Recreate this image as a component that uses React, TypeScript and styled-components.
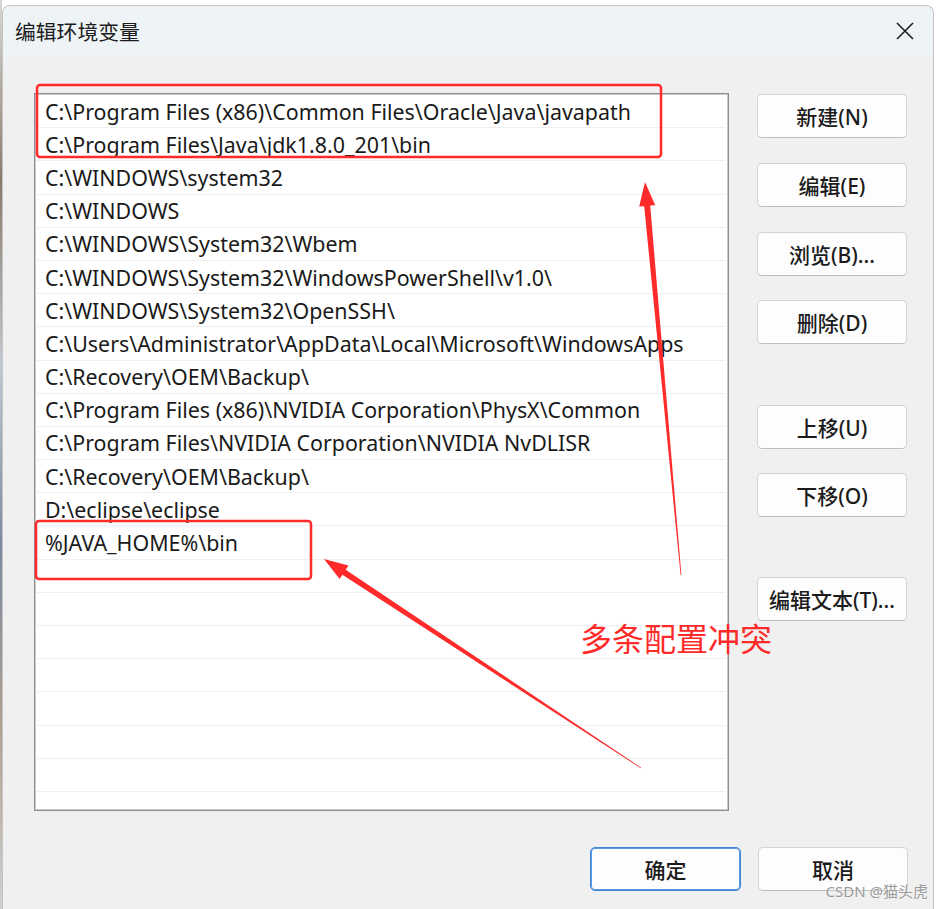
import React from 'react'
import styled, { createGlobalStyle } from 'styled-components'

const GlobalStyle = createGlobalStyle`
  html, body {
    margin: 0;
    padding: 0;
    background: #ffffff;
  }
  * {
    box-sizing: border-box;
  }
`

const FONT = `"Noto Sans", "Noto Sans CJK SC", "Liberation Sans", sans-serif`

const PATHS = [
  'C:\\Program Files (x86)\\Common Files\\Oracle\\Java\\javapath',
  'C:\\Program Files\\Java\\jdk1.8.0_201\\bin',
  'C:\\WINDOWS\\system32',
  'C:\\WINDOWS',
  'C:\\WINDOWS\\System32\\Wbem',
  'C:\\WINDOWS\\System32\\WindowsPowerShell\\v1.0\\',
  'C:\\WINDOWS\\System32\\OpenSSH\\',
  'C:\\Users\\Administrator\\AppData\\Local\\Microsoft\\WindowsApps',
  'C:\\Recovery\\OEM\\Backup\\',
  'C:\\Program Files (x86)\\NVIDIA Corporation\\PhysX\\Common',
  'C:\\Program Files\\NVIDIA Corporation\\NVIDIA NvDLISR',
  'C:\\Recovery\\OEM\\Backup\\',
  'D:\\eclipse\\eclipse',
  '%JAVA_HOME%\\bin',
]

const TOTAL_ROWS = 22

const SIDE_BUTTONS = [
  { label: '新建(N)', gap: 0 },
  { label: '编辑(E)', gap: 25 },
  { label: '浏览(B)...', gap: 25 },
  { label: '删除(D)', gap: 24 },
  { label: '上移(U)', gap: 61 },
  { label: '下移(O)', gap: 24 },
  { label: '编辑文本(T)...', gap: 60 },
]

const Page = styled.div`
  position: relative;
  width: 944px;
  height: 909px;
  overflow: hidden;
  background: #ffffff;
  font-family: ${FONT};
`

const DesktopStrip = styled.div`
  position: absolute;
  left: 0;
  top: 0;
  width: 2px;
  height: 909px;
  background: linear-gradient(180deg, #d8d8d8 0%, #8a7a6a 20%, #c0c8d0 40%, #7a8aa0 60%, #b0a090 80%, #d0d0d0 100%);
`

const Window = styled.div`
  margin: 5px 0 0 2px;
  width: 932px;
  height: 904px;
  background: #f0f0f0;
  border: 1px solid #c4c4c4;
  border-bottom: none;
  border-radius: 8px 8px 0 0;
  overflow: hidden;
`

const TitleBar = styled.div`
  height: 51px;
  background: #eef3f6;
  display: flex;
  align-items: center;
  justify-content: space-between;
  padding: 0 18px 0 12px;
`

const Title = styled.div`
  font-size: 20.8px;
  color: #1c1c1c;
  font-family: "Noto Sans CJK SC", sans-serif;
  margin-top: -2px;
`

const CloseIcon = styled.svg`
  width: 20px;
  height: 20px;
  margin-top: -2px;
`

const Body = styled.div`
  display: flex;
  gap: 28px;
  padding: 36px 0 0 31px;
`

const ListBox = styled.div`
  width: 695px;
  height: 718px;
  background: #ffffff;
  border: 1px solid #8f8f8f;
  box-shadow: inset 0 0 0 1px #c9c9c9;
  padding: 1px 2px 0 2px;
  overflow: hidden;
`

const Row = styled.div`
  height: 33.2px;
  border-bottom: 1px solid #efefef;
  padding-left: 8px;
  display: flex;
  align-items: center;
  font-size: 21.4px;
  color: #1a1a1a;
  white-space: nowrap;
`

const ButtonColumn = styled.div`
  display: flex;
  flex-direction: column;
  padding-top: 1px;
`

const DialogButton = styled.button<{ $gap?: number; $primary?: boolean }>`
  width: ${(p) => (p.$primary ? 151 : 150)}px;
  height: 44px;
  margin-top: ${(p) => p.$gap ?? 0}px;
  background: #fdfdfd;
  border: 1px solid ${(p) => (p.$primary ? '#3f86d6' : '#d3d3d3')};
  border-bottom-color: ${(p) => (p.$primary ? '#3f86d6' : '#bdbdbd')};
  box-shadow: ${(p) => (p.$primary ? 'inset 0 0 0 1px #5a9ae0' : 'none')};
  border-radius: 5px;
  font-family: ${FONT};
  font-size: 21px;
  font-weight: 500;
  color: #1b1b1b;
  padding: 0;
  display: flex;
  align-items: center;
  justify-content: center;
`

const Footer = styled.div`
  display: flex;
  justify-content: flex-end;
  gap: 17px;
  margin-top: 36px;
  padding-right: 25px;
`

const Overlay = styled.svg`
  position: absolute;
  left: 0;
  top: 0;
  width: 944px;
  height: 909px;
  pointer-events: none;
`

const Note = styled.div`
  position: absolute;
  left: 580px;
  top: 615px;
  font-size: 32px;
  line-height: 44px;
  color: #ff2a2a;
  font-family: "Noto Sans CJK SC", sans-serif;
`

const Watermark = styled.div`
  position: absolute;
  right: 16px;
  top: 880px;
  font-size: 15px;
  color: #9a9a9a;
  font-family: "Noto Sans", "Noto Sans CJK SC", sans-serif;
  text-shadow: 0 0 2px #ffffff;
`

// tapered arrow from thin tail to a filled head at the tip
const arrowPoints = (tx: number, ty: number, px: number, py: number) => {
  const dx = px - tx
  const dy = py - ty
  const len = Math.hypot(dx, dy)
  const ux = dx / len
  const uy = dy / len
  const nx = -uy
  const ny = ux
  const headLen = 24
  const headW = 8
  const neckW = 3
  const tailW = 0.4
  const bx = px - ux * headLen
  const by = py - uy * headLen
  const pts = [
    [tx + nx * tailW, ty + ny * tailW],
    [bx + nx * neckW, by + ny * neckW],
    [bx + nx * headW, by + ny * headW],
    [px, py],
    [bx - nx * headW, by - ny * headW],
    [bx - nx * neckW, by - ny * neckW],
    [tx - nx * tailW, ty - ny * tailW],
  ]
  return pts.map(([x, y]) => `${x.toFixed(1)},${y.toFixed(1)}`).join(' ')
}

export default function App() {
  const rows = Array.from({ length: TOTAL_ROWS }, (_, i) => PATHS[i] ?? '')

  return (
    <Page>
      <GlobalStyle />
      <DesktopStrip />
      <Window>
        <TitleBar>
          <Title>编辑环境变量</Title>
          <CloseIcon viewBox="0 0 20 20">
            <path d="M2 2 L18 18 M18 2 L2 18" stroke="#1c1c1c" strokeWidth="1.6" fill="none" />
          </CloseIcon>
        </TitleBar>
        <Body>
          <ListBox>
            {rows.map((r, i) => (
              <Row key={i}>{r}</Row>
            ))}
          </ListBox>
          <ButtonColumn>
            {SIDE_BUTTONS.map((b) => (
              <DialogButton key={b.label} $gap={b.gap}>
                {b.label}
              </DialogButton>
            ))}
          </ButtonColumn>
        </Body>
        <Footer>
          <DialogButton $primary>确定</DialogButton>
          <DialogButton>取消</DialogButton>
        </Footer>
      </Window>

      <Overlay viewBox="0 0 944 909">
        <rect x="37" y="85" width="624" height="72" rx="3" fill="none" stroke="#ff2a2a" strokeWidth="2.5" />
        <rect x="36" y="521" width="275" height="58" rx="3" fill="none" stroke="#ff2a2a" strokeWidth="2.5" />
        <polygon points={arrowPoints(681, 575, 645, 182)} fill="#ff2a2a" />
        <polygon points={arrowPoints(641, 768, 324, 559)} fill="#ff2a2a" />
      </Overlay>
      <Note>多条配置冲突</Note>
      <Watermark>CSDN @猫头虎</Watermark>
    </Page>
  )
}
